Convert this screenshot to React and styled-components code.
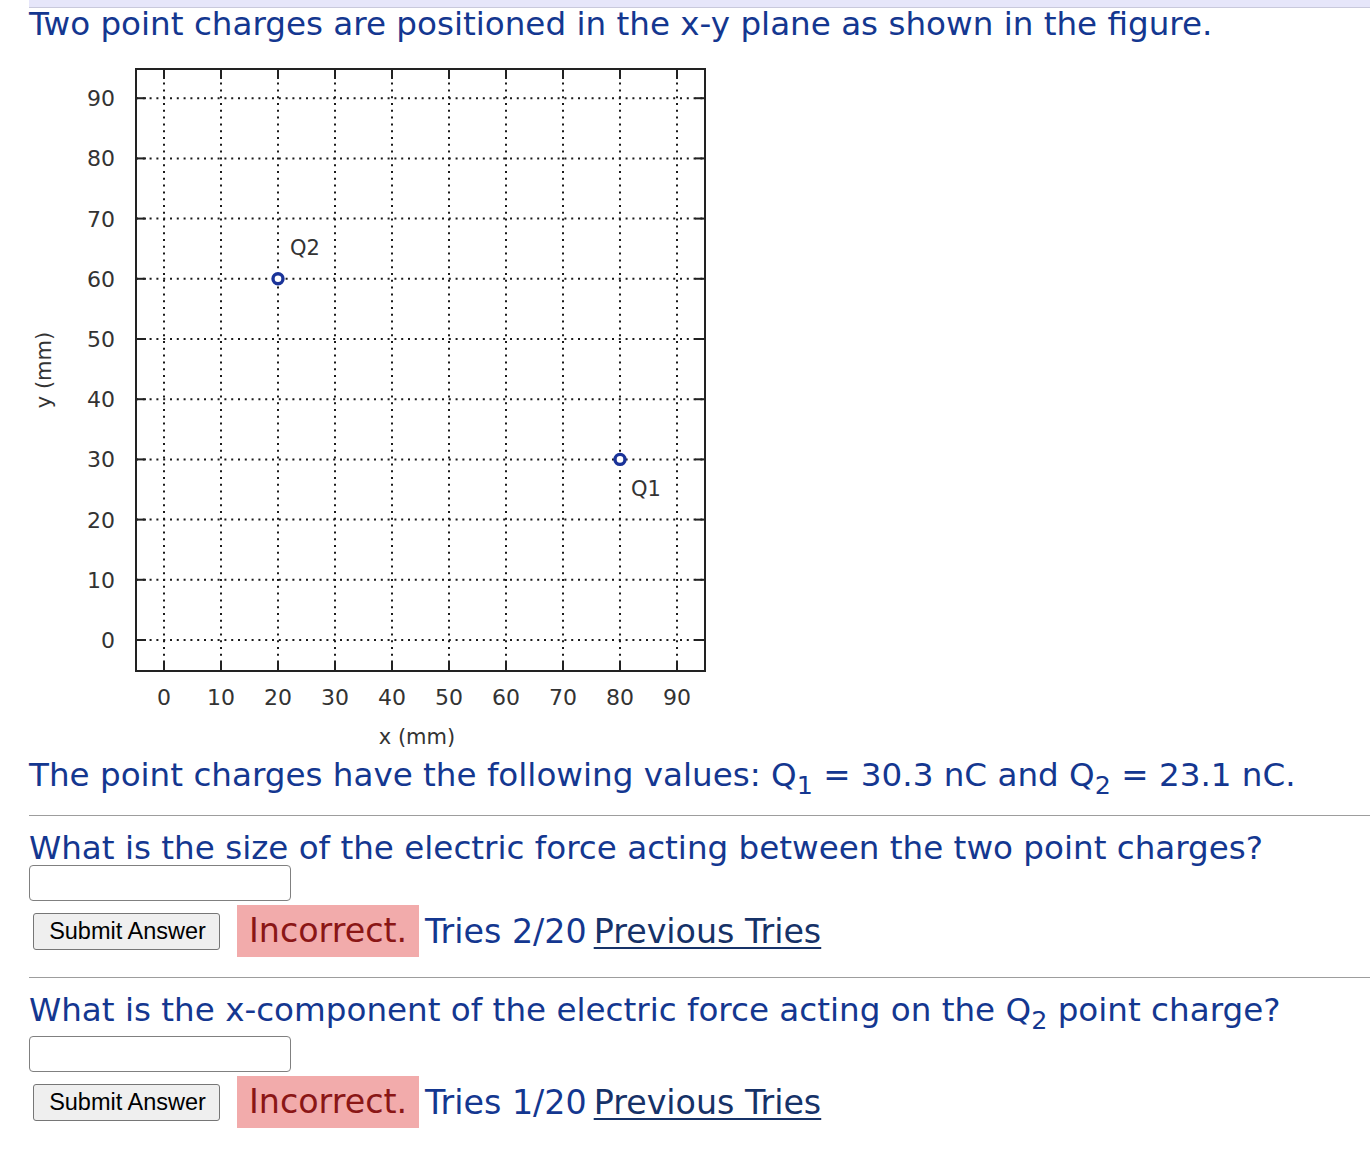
import React from "react";
import styled, { createGlobalStyle } from "styled-components";

const GlobalStyle = createGlobalStyle`
  body {
    margin: 0;
    background: #fff;
    font-family: "DejaVu Sans", Verdana, sans-serif;
    color: #143790;
  }
`;

const Page = styled.div`
  padding-left: 29px;
`;

const TopBar = styled.div`
  height: 7px;
  background: #e6e6fa;
  border-bottom: 1px solid #c9c9dc;
`;

const Line = styled.p`
  margin: ${(p) => p.$mt || 0}px 0 0 0;
  font-size: 32.6px;
  line-height: 32px;
  white-space: nowrap;
`;

const Sub = styled.sub`
  font-size: 0.78em;
  line-height: 0;
  vertical-align: -0.3em;
`;

const Divider = styled.div`
  margin-top: ${(p) => p.$mt}px;
  border-top: 1px solid #9d9d9d;
`;

const AnswerInput = styled.input`
  display: block;
  box-sizing: border-box;
  margin-top: ${(p) => p.$mt}px;
  width: 262px;
  height: 36px;
  border: 1px solid #808080;
  border-radius: 4px;
  background: #fff;
`;

const Row = styled.div`
  display: flex;
  align-items: center;
  height: 52px;
  margin-top: 4px;
  font-size: 33.3px;
  white-space: nowrap;
`;

const SubmitButton = styled.button`
  box-sizing: border-box;
  margin-left: 4px;
  width: 187px;
  height: 37px;
  padding: 0 0 0 2px;
  background: #efefef;
  border: 1px solid #767676;
  border-radius: 3px;
  font-family: "Liberation Sans", Arial, sans-serif;
  font-size: 23.5px;
  color: #000;
`;

const Verdict = styled.span`
  margin-left: 17px;
  height: 52px;
  line-height: 52px;
  padding: 0 12px;
  background: #f2abab;
  color: #8a1616;
`;

const Tries = styled.span`
  margin-left: 6px;
`;

const PrevLink = styled.a`
  margin-left: 7px;
  color: #163268;
  text-decoration: underline;
  text-decoration-thickness: 2px;
  text-underline-offset: 4px;
`;

const ChartSvg = styled.svg`
  display: block;
  font-family: "DejaVu Sans", sans-serif;
`;

// plot geometry (local svg coords)
const FL = 107;
const FR = 676;
const FT = 29;
const FB = 631;
const gx = (v) => 135 + (57 * v) / 10;
const gy = (v) => 600 - (60.2 * v) / 10;
const ticks = [0, 10, 20, 30, 40, 50, 60, 70, 80, 90];

const charges = [
  { name: "Q1", x: 80, y: 30, lx: 602, ly: 456 },
  { name: "Q2", x: 20, y: 60, lx: 261, ly: 215 },
];

function Chart() {
  return (
    <ChartSvg width="700" height="719" viewBox="0 0 700 719">
      {ticks.map((v) => (
        <g key={v} stroke="#1a1a1a" strokeWidth="2" strokeDasharray="2 4.8">
          <line x1={gx(v)} y1={FT} x2={gx(v)} y2={FB} />
          <line x1={FL} y1={gy(v)} x2={FR} y2={gy(v)} />
        </g>
      ))}
      {ticks.map((v) => (
        <g key={"t" + v} stroke="#222" strokeWidth="2">
          <line x1={gx(v)} y1={FT} x2={gx(v)} y2={FT + 10} />
          <line x1={gx(v)} y1={FB} x2={gx(v)} y2={FB - 10} />
          <line x1={FL} y1={gy(v)} x2={FL + 10} y2={gy(v)} />
          <line x1={FR} y1={gy(v)} x2={FR - 10} y2={gy(v)} />
        </g>
      ))}
      <rect
        x={FL}
        y={FT}
        width={FR - FL}
        height={FB - FT}
        fill="none"
        stroke="#222"
        strokeWidth="2"
      />
      {ticks.map((v) => (
        <text
          key={"yl" + v}
          x={86}
          y={gy(v) + 8}
          textAnchor="end"
          fontSize="22"
          fill="#333"
        >
          {v}
        </text>
      ))}
      {ticks.map((v) => (
        <text
          key={"xl" + v}
          x={gx(v)}
          y={665}
          textAnchor="middle"
          fontSize="22"
          fill="#333"
        >
          {v}
        </text>
      ))}
      <text x={388} y={704} textAnchor="middle" fontSize="21" fill="#333">
        x (mm)
      </text>
      <text
        x={0}
        y={0}
        transform="translate(22 330) rotate(-90)"
        textAnchor="middle"
        fontSize="21"
        fill="#333"
      >
        y (mm)
      </text>
      {charges.map((c) => (
        <g key={c.name}>
          <circle
            cx={gx(c.x)}
            cy={gy(c.y)}
            r="5"
            fill="#fff"
            stroke="#1a3399"
            strokeWidth="3.4"
          />
          <text x={c.lx} y={c.ly} fontSize="21" fill="#333">
            {c.name}
          </text>
        </g>
      ))}
    </ChartSvg>
  );
}

function AnswerBlock({ tries, inputGap }) {
  return (
    <>
      <AnswerInput type="text" $mt={inputGap} />
      <Row>
        <SubmitButton>Submit Answer</SubmitButton>
        <Verdict>Incorrect.</Verdict>
        <Tries>Tries {tries}/20</Tries>
        <PrevLink href="#">Previous Tries</PrevLink>
      </Row>
    </>
  );
}

export default function App() {
  return (
    <Page>
      <GlobalStyle />
      <TopBar />
      <Line>
        Two point charges are positioned in the x-y plane as shown in the
        figure.
      </Line>
      <Chart />
      <Line>
        The point charges have the following values: Q<Sub>1</Sub> = 30.3 nC
        and Q<Sub>2</Sub> = 23.1 nC.
      </Line>
      <Divider $mt={24} />
      <Line $mt={16}>
        What is the size of the electric force acting between the two point
        charges?
      </Line>
      <AnswerBlock tries={2} inputGap={1} />
      <Divider $mt={20} />
      <Line $mt={16}>
        What is the x-component of the electric force acting on the Q
        <Sub>2</Sub> point charge?
      </Line>
      <AnswerBlock tries={1} inputGap={10} />
    </Page>
  );
}
